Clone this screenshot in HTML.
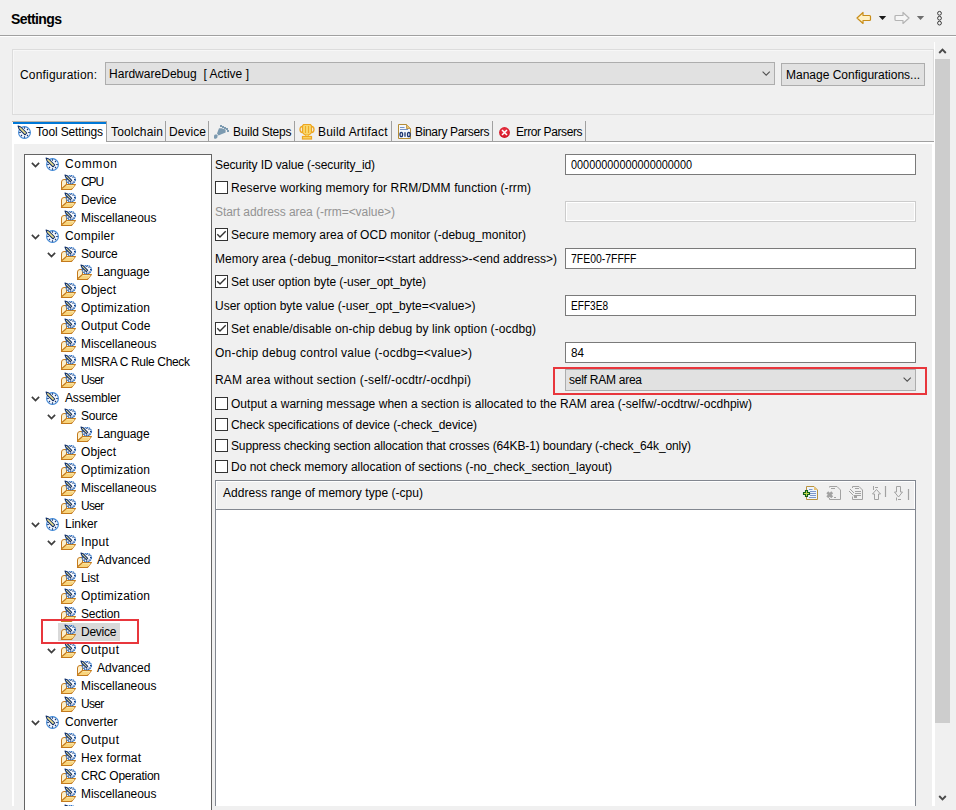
<!DOCTYPE html>
<html><head><meta charset="utf-8"><title>Settings</title>
<style>
html,body{margin:0;padding:0}
body{width:956px;height:810px;overflow:hidden;position:relative;background:#f0f0f0;font-family:"Liberation Sans",sans-serif;font-size:12px;color:#000}
.t{position:absolute;white-space:pre;line-height:14px}
.r{position:absolute;box-sizing:border-box}
.i{position:absolute;overflow:visible}
</style></head><body>
<svg width="0" height="0" style="position:absolute">
<defs>
<symbol id="clk" viewBox="0 0 13 13" overflow="visible">
 <circle cx="6.5" cy="6.5" r="5.9" fill="#f3f7fd" stroke="#3a84d4" stroke-width="1.1"/>
 <g stroke="#1a3570" stroke-width="1.1">
  <path d="M6.5 1.2v1.6M6.5 10.2v1.6M1.2 6.5h1.6M10.2 6.5h1.6M3 10l1-1M10 10l-1-1M10 3l-1 1"/>
 </g>
 <path d="M0.1 0.1L2.8 1L8.8 7L7 8.8L1 2.8Z" fill="#eedf8a" stroke="#12306a" stroke-width="1.05" stroke-linejoin="round"/>
</symbol>
<symbol id="clks" viewBox="0 0 11 10" overflow="visible">
 <ellipse cx="5.8" cy="4.6" rx="4.7" ry="4.1" fill="#f6f9fe" stroke="#2f74c6" stroke-width="1.15" stroke-dasharray="1.5 0.5"/>
 <g stroke="#1a3570" stroke-width="1.05">
  <path d="M5.8 0.9v1.2M9 4.6h1.2M8.4 1.9l-0.8 0.8M3 7.4l0.8-0.8M8.6 7.4l-0.8-0.8M5.8 7.3v1.2M1.4 4.6h1.1"/>
 </g>
 <path d="M0 0L2.1 0.7L6.7 5.3L5.3 6.7L0.7 2.1Z" fill="#e8dc90" stroke="#12306a" stroke-width="1.05" stroke-linejoin="round"/>
</symbol>
<symbol id="fld" viewBox="0 0 16 18" overflow="visible">
 <path d="M0.5 16V9Q0.5 6.5 3 6.5H5.5V11.5L0.5 16Z" fill="#fdf0cc" stroke="#c47a1c" stroke-width="1" stroke-linejoin="round"/>
 <path d="M5.5 11.5H14.5L10.5 16.5H0.5V15.8Z" fill="#f8d47c" stroke="#c47a1c" stroke-width="1.1" stroke-linejoin="round"/>
 <path d="M5.5 12.6H13L11 15" fill="none" stroke="#fde9a8" stroke-width="0.9"/>
 <svg x="4" y="2" width="11" height="10" viewBox="0 0 11 10" overflow="visible"><use href="#clks"/></svg>
</symbol>
<symbol id="chev" viewBox="0 0 9 6">
 <path d="M0.9 0.9L4.5 4.5L8.1 0.9" fill="none" stroke="#3e3e3e" stroke-width="1.75"/>
</symbol>
<symbol id="cchev" viewBox="0 0 9 6">
 <path d="M0.6 0.6L4.2 4.2L7.8 0.6" fill="none" stroke="#505050" stroke-width="1.05"/>
</symbol>
<symbol id="chk" viewBox="0 0 13 13">
 <rect x="0.5" y="0.5" width="12" height="12" fill="#fff" stroke="#333"/>
</symbol>
<symbol id="chkd" viewBox="0 0 13 13">
 <rect x="0.5" y="0.5" width="12" height="12" fill="#fff" stroke="#333"/>
 <path d="M2.3 6.3L5 9L10.7 3.3" fill="none" stroke="#333" stroke-width="1.4"/>
</symbol>
</defs></svg>

<div class="t" style="left:11px;top:11px;font-size:14px;line-height:16px;font-weight:700;letter-spacing:-0.605px;">Settings</div>
<div class="r" style="left:0px;top:35px;width:956px;height:1px;background:#a0a0a0"></div>
<div class="r" style="left:0px;top:36px;width:956px;height:1px;background:#fff"></div>
<svg class="i" style="left:856px;top:11px" width="16" height="14" viewBox="0 0 16 14"><path d="M1 7L7 1.5V4.5H13.5Q14.5 4.5 14.5 5.5V8.5Q14.5 9.5 13.5 9.5H7V12.5Z" fill="#fff1c4" stroke="#c88d1a" stroke-width="1.2" stroke-linejoin="round"/></svg>
<svg class="i" style="left:878px;top:16px" width="9" height="6" viewBox="0 0 9 6"><path d="M0.8 0H8.2L4.5 4Z" fill="#1a1a1a"/></svg>
<svg class="i" style="left:894px;top:11px" width="16" height="14" viewBox="0 0 16 14"><path d="M15 7L9 1.5V4.5H2Q1 4.5 1 5.5V8.5Q1 9.5 2 9.5H9V12.5Z" fill="#f6f6f6" stroke="#b4b4b4" stroke-width="1.2" stroke-linejoin="round"/></svg>
<svg class="i" style="left:916px;top:16px" width="9" height="6" viewBox="0 0 9 6"><path d="M0.8 0H8.2L4.5 4Z" fill="#6e6e6e"/></svg>
<svg class="i" style="left:936px;top:10px" width="7" height="17" viewBox="0 0 7 17"><g fill="none" stroke="#3a3a3a" stroke-width="1"><circle cx="3.5" cy="3.3" r="1.9"/><circle cx="3.5" cy="8.2" r="1.9"/><circle cx="3.5" cy="13.1" r="1.9"/></g></svg>
<div class="r" style="left:934px;top:42px;width:1px;height:764px;background:#fff"></div>
<div class="r" style="left:935px;top:59px;width:15px;height:664px;background:#cdcdcd"></div>
<svg class="i" style="left:938px;top:48px" width="9" height="6" viewBox="0 0 9 6"><path d="M1.2 5L4.5 1.7L7.8 5" fill="none" stroke="#4a4a4a" stroke-width="1.9"/></svg>
<svg class="i" style="left:938px;top:795px" width="9" height="6" viewBox="0 0 9 6"><path d="M1.2 1L4.5 4.3L7.8 1" fill="none" stroke="#4a4a4a" stroke-width="1.9"/></svg>
<div class="r" style="left:12px;top:49px;width:922px;height:66px;border:1px solid #dcdcdc;"></div>
<div class="r" style="left:13px;top:50px;width:920px;height:64px;border-left:1px solid #f7f7f7;border-top:1px solid #f7f7f7;"></div>
<div class="t" style="left:20px;top:68px;letter-spacing:0.175px;">Configuration:</div>
<div class="r" style="left:105px;top:62px;width:670px;height:23px;background:#e1e1e1;border:1px solid #adadad"></div>
<div class="t" style="left:109px;top:67px;letter-spacing:0.025px;">HardwareDebug  [ Active ]</div>
<svg class="i" style="left:762px;top:71px" width="9" height="6"><use href="#cchev"/></svg>
<div class="r" style="left:781px;top:63px;width:144px;height:23px;background:#e1e1e1;border:1px solid #adadad"></div>
<div class="t" style="left:786px;top:68px;">Manage Configurations...</div>
<div class="r" style="left:106px;top:141px;width:828px;height:1px;background:#a0a0a0"></div>
<div class="r" style="left:12px;top:142px;width:922px;height:668px;background:#fff"></div>
<div class="r" style="left:14px;top:144px;width:918px;height:662px;background:#f0f0f0"></div>
<div class="r" style="left:12px;top:806px;width:922px;height:4px;background:#f0f0f0"></div>
<div class="r" style="left:12px;top:121px;width:95px;height:21px;background:#fff;border-top:1px solid #bdb2a6;border-right:1px solid #a0a0a0"></div>
<div class="r" style="left:13px;top:122px;width:93px;height:2px;background:#0078d7"></div>
<svg class="i" style="left:18px;top:126px" width="13" height="13"><use href="#clk"/></svg>
<div class="t" style="left:36px;top:125px;letter-spacing:-0.143px;">Tool Settings</div>
<div class="t" style="left:111px;top:125px;letter-spacing:0.162px;">Toolchain</div>
<div class="r" style="left:165px;top:121px;width:1px;height:20px;background:#a0a0a0"></div>
<div class="t" style="left:169px;top:125px;letter-spacing:0.062px;">Device</div>
<div class="r" style="left:208px;top:121px;width:1px;height:20px;background:#a0a0a0"></div>
<svg class="i" style="left:213px;top:124px" width="17" height="16" viewBox="0 0 17 16"><g fill="#7c9ab0"><path d="M1 12.2Q1 10.8 2.3 10.6L3.8 10.6L4.6 11.6L4.4 13.6L3 14.8H1.6Q1 14.2 1 13.4Z"/><path d="M4 9.6L6 4.2H8.6L12.6 5.6V8.6L8.4 10.2L5.6 11.4Z"/><rect x="7" y="1" width="2" height="2"/><rect x="9" y="2" width="2" height="2"/><rect x="11" y="3" width="2" height="2"/><rect x="13" y="4" width="2" height="2"/><rect x="14" y="6" width="2" height="2"/></g></svg>
<div class="t" style="left:233px;top:125px;letter-spacing:-0.220px;">Build Steps</div>
<div class="r" style="left:294px;top:121px;width:1px;height:20px;background:#a0a0a0"></div>
<svg class="i" style="left:299px;top:123px" width="16" height="16" viewBox="0 0 16 16"><path d="M4.5 1.5H11.5L12.5 3V9.5Q11 11.5 10.5 11.5H5.5Q5 11.5 3.5 9.5V3Z" fill="#f8d66a" stroke="#eea620" stroke-width="1.2"/><path d="M3.5 3.5Q1 3.5 1 6.5Q1 9.5 3.5 9.5M12.5 3.5Q15 3.5 15 6.5Q15 9.5 12.5 9.5" fill="none" stroke="#eea620" stroke-width="1.3"/><path d="M6.5 11.5V13.5M9.5 11.5V13.5" stroke="#eea620" stroke-width="1.2"/><rect x="6.5" y="11.5" width="3" height="2.5" fill="#f8d66a"/><rect x="3.5" y="13.5" width="9" height="2.5" fill="#f8d66a" stroke="#eea620" stroke-width="1.2"/><path d="M6.5 3V10M9.5 3V10" stroke="#eea620" stroke-width="0.9"/></svg>
<div class="t" style="left:318px;top:125px;letter-spacing:0.215px;">Build Artifact</div>
<div class="r" style="left:391px;top:121px;width:1px;height:20px;background:#a0a0a0"></div>
<svg class="i" style="left:398px;top:124px" width="14" height="15" viewBox="0 0 14 15"><path d="M0.5 0.5H8.5L12.5 4.5V14.5H0.5Z" fill="#f4f8fd" stroke="#b48c38" stroke-width="1"/><path d="M8.5 0.5V4.5H12.5" fill="#e8c070" stroke="#b48c38" stroke-width="0.8"/><path d="M2 3.5H6.5M2 5.5H10" stroke="#6a88c0" stroke-width="0.9"/><g fill="none" stroke="#1a3470" stroke-width="1.3"><ellipse cx="3.3" cy="10.5" rx="1.3" ry="2.2"/><path d="M7 8.2V12.8"/><ellipse cx="10.8" cy="10.5" rx="1.3" ry="2.2"/></g></svg>
<div class="t" style="left:415px;top:125px;letter-spacing:-0.323px;">Binary Parsers</div>
<div class="r" style="left:492px;top:121px;width:1px;height:20px;background:#a0a0a0"></div>
<svg class="i" style="left:499px;top:127px" width="11" height="11" viewBox="0 0 11 11"><defs><radialGradient id="rg" cx="0.5" cy="0.4" r="0.6"><stop offset="0" stop-color="#f04050"/><stop offset="1" stop-color="#d01020"/></radialGradient></defs><circle cx="5.5" cy="5.5" r="5.4" fill="url(#rg)"/><path d="M3 3L8 8M8 3L3 8" stroke="#fff" stroke-width="1.5"/></svg>
<div class="t" style="left:516px;top:125px;letter-spacing:-0.404px;">Error Parsers</div>
<div class="r" style="left:585px;top:121px;width:1px;height:20px;background:#a0a0a0"></div>
<div class="r" style="left:24px;top:154px;width:188px;height:660px;background:#fff;border:1px solid #646464"></div>
<div style="position:absolute;left:25px;top:155px;width:186px;height:651px;overflow:hidden">
<svg class="i" style="left:6px;top:7px" width="9" height="6"><use href="#chev"/></svg>
<svg class="i" style="left:21px;top:3px" width="13" height="13"><use href="#clk"/></svg>
<div class="t" style="left:40px;top:2px;letter-spacing:0.662px;">Common</div>
<svg class="i" style="left:36px;top:18px" width="16" height="18"><use href="#fld"/></svg>
<div class="t" style="left:56px;top:20px;letter-spacing:-1.072px;">CPU</div>
<svg class="i" style="left:36px;top:36px" width="16" height="18"><use href="#fld"/></svg>
<div class="t" style="left:56px;top:38px;letter-spacing:-0.258px;">Device</div>
<svg class="i" style="left:36px;top:54px" width="16" height="18"><use href="#fld"/></svg>
<div class="t" style="left:56px;top:56px;letter-spacing:-0.054px;">Miscellaneous</div>
<svg class="i" style="left:6px;top:79px" width="9" height="6"><use href="#chev"/></svg>
<svg class="i" style="left:21px;top:75px" width="13" height="13"><use href="#clk"/></svg>
<div class="t" style="left:40px;top:74px;letter-spacing:0.198px;">Compiler</div>
<svg class="i" style="left:22px;top:97px" width="9" height="6"><use href="#chev"/></svg>
<svg class="i" style="left:36px;top:90px" width="16" height="18"><use href="#fld"/></svg>
<div class="t" style="left:56px;top:92px;letter-spacing:-0.246px;">Source</div>
<svg class="i" style="left:52px;top:108px" width="16" height="18"><use href="#fld"/></svg>
<div class="t" style="left:72px;top:110px;letter-spacing:-0.113px;">Language</div>
<svg class="i" style="left:36px;top:126px" width="16" height="18"><use href="#fld"/></svg>
<div class="t" style="left:56px;top:128px;letter-spacing:0.062px;">Object</div>
<svg class="i" style="left:36px;top:144px" width="16" height="18"><use href="#fld"/></svg>
<div class="t" style="left:56px;top:146px;letter-spacing:0.209px;">Optimization</div>
<svg class="i" style="left:36px;top:162px" width="16" height="18"><use href="#fld"/></svg>
<div class="t" style="left:56px;top:164px;letter-spacing:0.135px;">Output Code</div>
<svg class="i" style="left:36px;top:180px" width="16" height="18"><use href="#fld"/></svg>
<div class="t" style="left:56px;top:182px;letter-spacing:-0.054px;">Miscellaneous</div>
<svg class="i" style="left:36px;top:198px" width="16" height="18"><use href="#fld"/></svg>
<div class="t" style="left:56px;top:200px;letter-spacing:-0.335px;">MISRA C Rule Check</div>
<svg class="i" style="left:36px;top:216px" width="16" height="18"><use href="#fld"/></svg>
<div class="t" style="left:56px;top:218px;letter-spacing:-0.681px;">User</div>
<svg class="i" style="left:6px;top:241px" width="9" height="6"><use href="#chev"/></svg>
<svg class="i" style="left:21px;top:237px" width="13" height="13"><use href="#clk"/></svg>
<div class="t" style="left:40px;top:236px;letter-spacing:-0.136px;">Assembler</div>
<svg class="i" style="left:22px;top:259px" width="9" height="6"><use href="#chev"/></svg>
<svg class="i" style="left:36px;top:252px" width="16" height="18"><use href="#fld"/></svg>
<div class="t" style="left:56px;top:254px;letter-spacing:-0.246px;">Source</div>
<svg class="i" style="left:52px;top:270px" width="16" height="18"><use href="#fld"/></svg>
<div class="t" style="left:72px;top:272px;letter-spacing:-0.113px;">Language</div>
<svg class="i" style="left:36px;top:288px" width="16" height="18"><use href="#fld"/></svg>
<div class="t" style="left:56px;top:290px;letter-spacing:0.062px;">Object</div>
<svg class="i" style="left:36px;top:306px" width="16" height="18"><use href="#fld"/></svg>
<div class="t" style="left:56px;top:308px;letter-spacing:0.209px;">Optimization</div>
<svg class="i" style="left:36px;top:324px" width="16" height="18"><use href="#fld"/></svg>
<div class="t" style="left:56px;top:326px;letter-spacing:-0.054px;">Miscellaneous</div>
<svg class="i" style="left:36px;top:342px" width="16" height="18"><use href="#fld"/></svg>
<div class="t" style="left:56px;top:344px;letter-spacing:-0.681px;">User</div>
<svg class="i" style="left:6px;top:367px" width="9" height="6"><use href="#chev"/></svg>
<svg class="i" style="left:21px;top:363px" width="13" height="13"><use href="#clk"/></svg>
<div class="t" style="left:40px;top:362px;letter-spacing:-0.017px;">Linker</div>
<svg class="i" style="left:22px;top:385px" width="9" height="6"><use href="#chev"/></svg>
<svg class="i" style="left:36px;top:378px" width="16" height="18"><use href="#fld"/></svg>
<div class="t" style="left:56px;top:380px;letter-spacing:0.299px;">Input</div>
<svg class="i" style="left:52px;top:396px" width="16" height="18"><use href="#fld"/></svg>
<div class="t" style="left:72px;top:398px;">Advanced</div>
<svg class="i" style="left:36px;top:414px" width="16" height="18"><use href="#fld"/></svg>
<div class="t" style="left:56px;top:416px;letter-spacing:-0.229px;">List</div>
<svg class="i" style="left:36px;top:432px" width="16" height="18"><use href="#fld"/></svg>
<div class="t" style="left:56px;top:434px;letter-spacing:0.209px;">Optimization</div>
<svg class="i" style="left:36px;top:450px" width="16" height="18"><use href="#fld"/></svg>
<div class="t" style="left:56px;top:452px;letter-spacing:-0.189px;">Section</div>
<div class="r" style="left:33px;top:468px;width:62px;height:18px;background:#d9d9d9"></div>
<svg class="i" style="left:36px;top:468px" width="16" height="18"><use href="#fld"/></svg>
<div class="t" style="left:56px;top:470px;letter-spacing:-0.258px;">Device</div>
<svg class="i" style="left:22px;top:493px" width="9" height="6"><use href="#chev"/></svg>
<svg class="i" style="left:36px;top:486px" width="16" height="18"><use href="#fld"/></svg>
<div class="t" style="left:56px;top:488px;letter-spacing:0.394px;">Output</div>
<svg class="i" style="left:52px;top:504px" width="16" height="18"><use href="#fld"/></svg>
<div class="t" style="left:72px;top:506px;">Advanced</div>
<svg class="i" style="left:36px;top:522px" width="16" height="18"><use href="#fld"/></svg>
<div class="t" style="left:56px;top:524px;letter-spacing:-0.054px;">Miscellaneous</div>
<svg class="i" style="left:36px;top:540px" width="16" height="18"><use href="#fld"/></svg>
<div class="t" style="left:56px;top:542px;letter-spacing:-0.681px;">User</div>
<svg class="i" style="left:6px;top:565px" width="9" height="6"><use href="#chev"/></svg>
<svg class="i" style="left:21px;top:561px" width="13" height="13"><use href="#clk"/></svg>
<div class="t" style="left:40px;top:560px;letter-spacing:-0.036px;">Converter</div>
<svg class="i" style="left:36px;top:576px" width="16" height="18"><use href="#fld"/></svg>
<div class="t" style="left:56px;top:578px;letter-spacing:0.394px;">Output</div>
<svg class="i" style="left:36px;top:594px" width="16" height="18"><use href="#fld"/></svg>
<div class="t" style="left:56px;top:596px;letter-spacing:0.146px;">Hex format</div>
<svg class="i" style="left:36px;top:612px" width="16" height="18"><use href="#fld"/></svg>
<div class="t" style="left:56px;top:614px;letter-spacing:-0.253px;">CRC Operation</div>
<svg class="i" style="left:36px;top:630px" width="16" height="18"><use href="#fld"/></svg>
<div class="t" style="left:56px;top:632px;letter-spacing:-0.054px;">Miscellaneous</div>
<svg class="i" style="left:36px;top:648px" width="16" height="18"><use href="#fld"/></svg>
</div>
<div class="r" style="left:41px;top:619px;width:98px;height:25px;border:2px solid #e8363c"></div>
<div class="t" style="left:215px;top:158px;letter-spacing:-0.109px;">Security ID value (-security_id)</div>
<div class="r" style="left:565px;top:154px;width:351px;height:21px;background:#fff;border:1px solid #7a7a7a"></div>
<div class="t" style="left:571px;top:158px;transform:scaleX(0.9065);transform-origin:0 0;">00000000000000000000</div>
<svg class="i" style="left:215px;top:181px" width="13" height="13"><use href="#chk"/></svg>
<div class="t" style="left:231px;top:181px;letter-spacing:0.108px;">Reserve working memory for RRM/DMM function (-rrm)</div>
<div class="t" style="left:215px;top:205px;color:#939393;letter-spacing:-0.055px;">Start address area (-rrm=&lt;value&gt;)</div>
<div class="r" style="left:565px;top:201px;width:351px;height:21px;background:#f0f0f0;border:1px solid #cccccc;box-shadow:inset 1px 1px 0 #fff,inset -1px -1px 0 #fff"></div>
<svg class="i" style="left:215px;top:228px" width="13" height="13"><use href="#chkd"/></svg>
<div class="t" style="left:231px;top:228px;letter-spacing:0.018px;">Secure memory area of OCD monitor (-debug_monitor)</div>
<div class="t" style="left:215px;top:252px;letter-spacing:0.026px;">Memory area (-debug_monitor=&lt;start address&gt;-&lt;end address&gt;)</div>
<div class="r" style="left:565px;top:248px;width:351px;height:21px;background:#fff;border:1px solid #7a7a7a"></div>
<div class="t" style="left:571px;top:252px;transform:scaleX(0.8692);transform-origin:0 0;">7FE00-7FFFF</div>
<svg class="i" style="left:215px;top:275px" width="13" height="13"><use href="#chkd"/></svg>
<div class="t" style="left:231px;top:275px;letter-spacing:-0.087px;">Set user option byte (-user_opt_byte)</div>
<div class="t" style="left:215px;top:299px;">User option byte value (-user_opt_byte=&lt;value&gt;)</div>
<div class="r" style="left:565px;top:295px;width:351px;height:21px;background:#fff;border:1px solid #7a7a7a"></div>
<div class="t" style="left:571px;top:299px;transform:scaleX(0.8406);transform-origin:0 0;">EFF3E8</div>
<svg class="i" style="left:215px;top:322px" width="13" height="13"><use href="#chkd"/></svg>
<div class="t" style="left:231px;top:322px;letter-spacing:0.099px;">Set enable/disable on-chip debug by link option (-ocdbg)</div>
<div class="t" style="left:215px;top:346px;letter-spacing:0.213px;">On-chip debug control value (-ocdbg=&lt;value&gt;)</div>
<div class="r" style="left:565px;top:342px;width:351px;height:21px;background:#fff;border:1px solid #7a7a7a"></div>
<div class="t" style="left:571px;top:346px;transform:scaleX(0.9731);transform-origin:0 0;">84</div>
<div class="t" style="left:215px;top:373px;letter-spacing:0.186px;">RAM area without section (-self/-ocdtr/-ocdhpi)</div>
<div class="r" style="left:565px;top:369px;width:351px;height:22px;background:#e1e1e1;border:1px solid #adadad"></div>
<div class="t" style="left:569px;top:373px;letter-spacing:-0.253px;">self RAM area</div>
<svg class="i" style="left:903px;top:377px" width="9" height="6"><use href="#cchev"/></svg>
<div class="r" style="left:553px;top:367px;width:374px;height:28px;border:2px solid #e8363c"></div>
<svg class="i" style="left:215px;top:397px" width="13" height="13"><use href="#chk"/></svg>
<div class="t" style="left:231px;top:397px;letter-spacing:0.037px;">Output a warning message when a section is allocated to the RAM area (-selfw/-ocdtrw/-ocdhpiw)</div>
<svg class="i" style="left:215px;top:418px" width="13" height="13"><use href="#chk"/></svg>
<div class="t" style="left:231px;top:418px;letter-spacing:-0.062px;">Check specifications of device (-check_device)</div>
<svg class="i" style="left:215px;top:439px" width="13" height="13"><use href="#chk"/></svg>
<div class="t" style="left:231px;top:439px;letter-spacing:-0.130px;">Suppress checking section allocation that crosses (64KB-1) boundary (-check_64k_only)</div>
<svg class="i" style="left:215px;top:460px" width="13" height="13"><use href="#chk"/></svg>
<div class="t" style="left:231px;top:460px;letter-spacing:-0.008px;">Do not check memory allocation of sections (-no_check_section_layout)</div>
<div class="r" style="left:215px;top:480px;width:701px;height:340px;background:#fff;border:1px solid #828790"></div>
<div class="r" style="left:216px;top:481px;width:699px;height:28px;background:#f0f0f0;border-left:1px solid #fff;border-top:1px solid #fff;border-right:1px solid #fff"></div>
<div class="r" style="left:216px;top:509px;width:699px;height:1px;background:#828790"></div>
<div class="t" style="left:223px;top:486px;letter-spacing:0.037px;">Address range of memory type (-cpu)</div>
<svg class="i" style="left:800px;top:483px" width="116" height="20" viewBox="0 0 116 20"><path d="M6.5 3.5H14L17.5 7V16.5H6.5Z" fill="#eef4fc" stroke="#b8923e" stroke-width="1"/><path d="M14 3.5V7H17.5Z" fill="#e9c270"/><path d="M9 6.5H12.5M10 8.5H16M10 10.5H16M10 12.5H16M9 14.5H16" stroke="#6f8cc4" stroke-width="0.9"/><path d="M5.5 7.5H7.5V9.5H9.5V11.5H7.5V13.5H5.5V11.5H3.5V9.5H5.5Z" fill="#c8dc50" stroke="#11601a" stroke-width="1.1" stroke-linejoin="miter"/><g stroke="#a2a2a2" fill="none"><path d="M29.5 4.5V3.5H37L40.5 7V16.5H29.5V15"/><path d="M27.3 9.3L32.2 14.2M32.2 9.3L27.3 14.2" stroke-width="2.7"/><path d="M34 14.5H36M31 5.5H35"/><path d="M52.5 5V3.5H59L62.5 7V16.5H52.5V13.5M55 5.5H59M55 8.5H61M55 10.5H61M55 12.5H61"/><path d="M50 6L54 10M49 8L53.5 12.5" stroke-width="1"/><rect x="54" y="12" width="3" height="3" fill="#a2a2a2" stroke="none"/><path d="M73.5 3V7M75 4.5H78"/><path d="M76.5 6.5L80.5 11H78.5V16.5H74.5V11H72.5Z"/><path d="M85.5 3V14" stroke-width="1.2"/><path d="M96.5 3.5H100.5V9H102.5L98.5 14L94.5 9H96.5Z"/><path d="M96.5 14.5V17.5M98 16.5H101"/><path d="M108.5 6V17" stroke-width="1.2"/></g></svg>
<div class="r" style="left:215px;top:806px;width:701px;height:4px;background:#f0f0f0"></div>
</body></html>
